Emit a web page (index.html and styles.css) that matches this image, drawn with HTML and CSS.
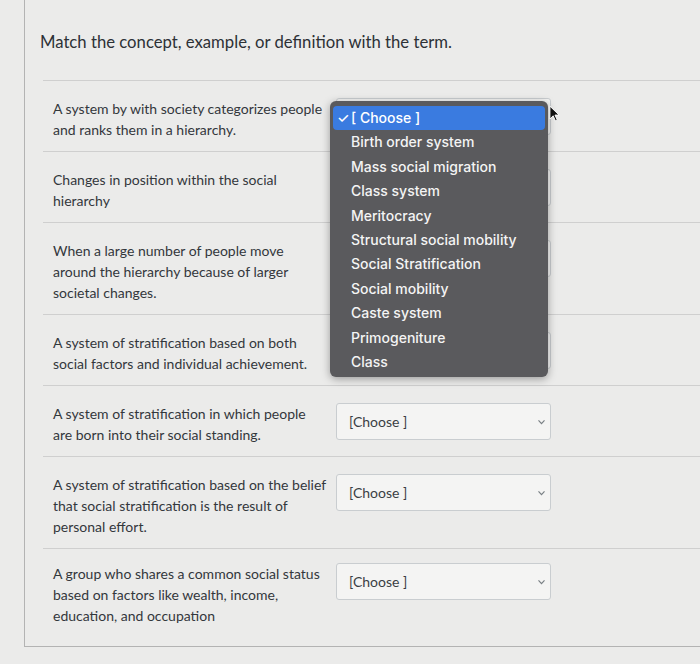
FILE: index.html
```html
<!DOCTYPE html>
<html>
<head>
<meta charset="utf-8">
<link rel="stylesheet" href="styles.css">
</head>
<body>
<div class="card">
  <h1 class="title">Match the concept, example, or definition with the term.</h1>
  <div class="rows">
    <div class="row">
      <div class="prompt">A system by with society categorizes people and ranks them in a hierarchy.</div>
      <div class="select covered"></div>
    </div>
    <div class="row">
      <div class="prompt">Changes in position within the social hierarchy</div>
      <div class="select covered"></div>
    </div>
    <div class="row">
      <div class="prompt">When a large number of people move around the hierarchy because of larger societal changes.</div>
      <div class="select covered"></div>
    </div>
    <div class="row">
      <div class="prompt">A system of stratification based on both social factors and individual achievement.</div>
      <div class="select covered"></div>
    </div>
    <div class="row">
      <div class="prompt">A system of stratification in which people are born into their social standing.</div>
      <div class="select"><span>[Choose ]</span><svg class="chev" viewBox="0 0 10 7"><path d="M1.5 1.5l3.5 3.8 3.5-3.8"/></svg></div>
    </div>
    <div class="row">
      <div class="prompt">A system of stratification based on the belief that social stratification is the result of personal effort.</div>
      <div class="select"><span>[Choose ]</span><svg class="chev" viewBox="0 0 10 7"><path d="M1.5 1.5l3.5 3.8 3.5-3.8"/></svg></div>
    </div>
    <div class="row last">
      <div class="prompt">A group who shares a common social status based on factors like wealth, income, education, and occupation</div>
      <div class="select"><span>[Choose ]</span><svg class="chev" viewBox="0 0 10 7"><path d="M1.5 1.5l3.5 3.8 3.5-3.8"/></svg></div>
    </div>
  </div>
</div>

<div class="menu">
  <div class="opt selected"><span class="check">✓</span>[ Choose ]</div>
  <div class="opt">Birth order system</div>
  <div class="opt">Mass social migration</div>
  <div class="opt">Class system</div>
  <div class="opt">Meritocracy</div>
  <div class="opt">Structural social mobility</div>
  <div class="opt">Social Stratification</div>
  <div class="opt">Social mobility</div>
  <div class="opt">Caste system</div>
  <div class="opt">Primogeniture</div>
  <div class="opt">Class</div>
</div>

<svg class="cursor" viewBox="0 0 12 18"><path d="M1 1v14l3.5-3.5 2.5 5.5 2-1-2.5-5.3H11z" fill="#111" stroke="#fff" stroke-width="1"/></svg>
</body>
</html>
```

FILE: styles.css
```css
html, body {
  margin: 0;
  padding: 0;
}
body {
  background: #ebebea;
  font-family: Lato, "Liberation Sans", sans-serif;
  color: #2f3338;
  width: 700px;
  height: 664px;
  overflow: hidden;
  position: relative;
}
.card {
  margin-left: 24px;
  height: 647px;
  border-left: 1px solid #b3b3b3;
  border-bottom: 1px solid #b3b3b3;
  box-sizing: border-box;
}
.title {
  margin: 0;
  padding: 30px 0 0 15px;
  font-size: 16.7px;
  font-weight: 400;
  line-height: 24px;
  color: #2d3136;
}
.rows {
  margin-top: 26px;
  margin-left: 18px;
  border-top: 1px solid #cfcfcf;
}
.row {
  display: flex;
  align-items: flex-start;
  padding: 17px 0 11px 10px;
  border-bottom: 1px solid #cfcfcf;
}
.row.last {
  border-bottom: none;
  padding-top: 14px;
}
.prompt {
  width: 274px;
  font-size: 14px;
  line-height: 21px;
  color: #33373c;
}
.select {
  margin-left: 9px;
  margin-top: 0;
  width: 215px;
  height: 37px;
  box-sizing: border-box;
  border: 1px solid #c9cdd0;
  border-radius: 3px;
  background: #f4f4f3;
  display: flex;
  align-items: center;
  justify-content: space-between;
  padding: 0 4px 0 12px;
  font-size: 14px;
  color: #3a3e43;
}
.chev {
  width: 9px;
  height: 6px;
  fill: none;
  stroke: #7a8085;
  stroke-width: 1.4;
}
.menu {
  position: absolute;
  left: 330px;
  top: 101px;
  width: 218px;
  height: 276px;
  box-sizing: border-box;
  padding: 5px 3px;
  background: #5a5a5d;
  border-radius: 6px;
  box-shadow: 0 2px 8px rgba(0,0,0,0.35);
  font-family: Inter, "Liberation Sans", sans-serif;
  font-size: 14px;
  font-weight: 500;
  color: #f4f4f4;
}
.opt {
  height: 24.4px;
  line-height: 24.4px;
  padding-left: 18px;
  position: relative;
  white-space: nowrap;
}
.opt.selected {
  background: #3a7be0;
  border-radius: 4px;
  color: #fff;
}
.check {
  position: absolute;
  left: 4px;
  font-size: 14px;
}
.cursor {
  position: absolute;
  left: 549px;
  top: 105px;
  width: 11px;
  height: 17px;
}
```
